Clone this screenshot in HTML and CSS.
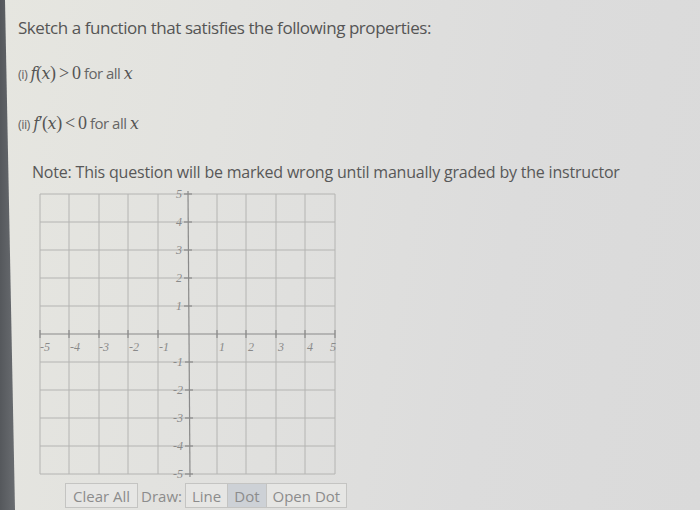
FILE: index.html
```html
<!DOCTYPE html>
<html>
<head>
<meta charset="utf-8">
<link rel="stylesheet" href="styles.css">
</head>
<body>
<div class="bezel"></div>
<main class="question">
  <p class="title">Sketch a function that satisfies the following properties:</p>
  <p class="prop"><span class="num">(i)</span> <span class="m">f</span><span class="r">(</span><span class="m">x</span><span class="r">)</span> <span class="r">&gt;</span> <span class="r">0</span> for all <span class="m">x</span></p>
  <p class="prop p2"><span class="num">(ii)</span> <span class="m">f</span><span class="r">&#8242;(</span><span class="m">x</span><span class="r">)</span> <span class="r">&lt;</span> <span class="r">0</span> for all <span class="m">x</span></p>
  <p class="note">Note: This question will be marked wrong until manually graded by the instructor</p>
  <svg class="graph" width="300" height="296" viewBox="0 0 300 296">
    <g transform="translate(0,6)">
    <g class="grid">
      <line x1="2" y1="4" x2="297" y2="4"/><line x1="2" y1="32" x2="297" y2="32"/><line x1="2" y1="60" x2="297" y2="60"/><line x1="2" y1="88" x2="297" y2="88"/><line x1="2" y1="116" x2="297" y2="116"/>
      <line x1="2" y1="172" x2="297" y2="172"/><line x1="2" y1="200" x2="297" y2="200"/><line x1="2" y1="228" x2="297" y2="228"/><line x1="2" y1="256" x2="297" y2="256"/><line x1="2" y1="284" x2="297" y2="284"/>
      <line x1="2" y1="4" x2="2" y2="284"/><line x1="31" y1="4" x2="31" y2="284"/><line x1="61" y1="4" x2="61" y2="284"/><line x1="90" y1="4" x2="90" y2="284"/><line x1="120" y1="4" x2="120" y2="284"/>
      <line x1="179" y1="4" x2="179" y2="284"/><line x1="208" y1="4" x2="208" y2="284"/><line x1="238" y1="4" x2="238" y2="284"/><line x1="267" y1="4" x2="267" y2="284"/><line x1="297" y1="4" x2="297" y2="284"/>
    </g>
    <g class="axis">
      <line x1="2" y1="144" x2="297" y2="144"/>
      <line x1="150" y1="1" x2="152" y2="287"/>
      <line x1="146" y1="4" x2="154" y2="4"/><line x1="146" y1="32" x2="154" y2="32"/><line x1="146" y1="60" x2="154" y2="60"/><line x1="146" y1="88" x2="154" y2="88"/><line x1="146" y1="116" x2="154" y2="116"/>
      <line x1="147" y1="172" x2="155" y2="172"/><line x1="147" y1="200" x2="155" y2="200"/><line x1="147" y1="228" x2="155" y2="228"/><line x1="147" y1="256" x2="155" y2="256"/><line x1="147" y1="284" x2="155" y2="284"/>
      <line x1="2" y1="140" x2="2" y2="148"/><line x1="31" y1="140" x2="31" y2="148"/><line x1="61" y1="140" x2="61" y2="148"/><line x1="90" y1="140" x2="90" y2="148"/><line x1="120" y1="140" x2="120" y2="148"/>
      <line x1="179" y1="140" x2="179" y2="148"/><line x1="208" y1="140" x2="208" y2="148"/><line x1="238" y1="140" x2="238" y2="148"/><line x1="267" y1="140" x2="267" y2="148"/><line x1="297" y1="140" x2="297" y2="148"/>
    </g>
    <g class="lbl ylbl">
      <text x="144" y="8">5</text><text x="144" y="36">4</text><text x="144" y="64">3</text><text x="144" y="92">2</text><text x="144" y="120">1</text>
      <text x="145" y="176">-1</text><text x="145" y="204">-2</text><text x="145" y="232">-3</text><text x="145" y="260">-4</text><text x="145" y="288">-5</text>
    </g>
    <g class="lbl xlbl">
      <text x="7" y="161">-5</text><text x="37" y="161">-4</text><text x="66" y="161">-3</text><text x="96" y="161">-2</text><text x="126" y="161">-1</text>
      <text x="184" y="161">1</text><text x="213" y="161">2</text><text x="243" y="161">3</text><text x="272" y="161">4</text><text x="295" y="161">5</text>
    </g>
    </g>
  </svg>
  <div class="tools">
    <button class="btn">Clear All</button>
    <span class="draw">Draw:</span>
    <div class="group">
      <button class="btn seg">Line</button><button class="btn seg active">Dot</button><button class="btn seg">Open Dot</button>
    </div>
  </div>
</main>
</body>
</html>
```
FILE: styles.css
```css
html, body {
  margin: 0;
  padding: 0;
  width: 700px;
  height: 510px;
  overflow: hidden;
}
body {
  background: linear-gradient(100deg, #e6e6e0 0%, #e2e2df 30%, #dcdcdc 70%, #dadada 100%);
  font-family: "Open Sans", "Liberation Sans", sans-serif;
  color: #5a5a5a;
  position: relative;
}
.bezel {
  position: absolute;
  left: 0;
  top: 0;
  width: 18px;
  height: 510px;
  background: linear-gradient(90deg, #55585c, #6e7175);
  clip-path: polygon(0 0, 5px 0, 15px 100%, 0 100%);
}
.question {
  padding: 16px 0 0 18px;
}
p { margin: 0; }
.title {
  font-size: 17px;
  line-height: 24px;
  letter-spacing: -0.45px;
  color: #555;
}
.prop {
  margin-top: 21px;
  font-size: 15px;
  line-height: 24px;
  height: 24px;
  margin-left: 0;
  color: #666;
  letter-spacing: -0.5px;
}
.prop.p2 { margin-top: 26px; }
.num { font-size: 13px; letter-spacing: -0.6px; }
.m {
  font-family: "DejaVu Serif", "Liberation Serif", serif;
  font-style: italic;
  font-size: 16px;
  color: #555;
}
.r {
  font-family: "Liberation Serif", serif;
  font-size: 18px;
  color: #555;
}
.note {
  margin-top: 26px;
  margin-left: 14px;
  font-size: 16px;
  line-height: 22px;
  letter-spacing: -0.2px;
  color: #585858;
}
.graph {
  display: block;
  margin: 1px 0 0 20px;
}
.grid line { stroke: #b4b4b2; stroke-width: 1; }
.axis line { stroke: #8a8a8a; stroke-width: 1.2; }
.lbl text {
  font-family: "Liberation Serif", serif;
  font-style: italic;
  font-size: 12px;
  fill: #8a8a8a;
}
.ylbl text { text-anchor: end; }
.xlbl text { text-anchor: middle; }
.tools {
  display: flex;
  align-items: center;
  margin: 3px 0 0 47px;
  gap: 3px;
}
.btn {
  font-family: "Open Sans", "Liberation Sans", sans-serif;
  font-size: 15px;
  color: #8c8c8c;
  background: #e6e6e4;
  border: 1px solid #c4c4c2;
  height: 25px;
  padding: 0 7px;
  margin: 0;
}
.draw {
  font-size: 15px;
  color: #8c8c8c;
}
.group { display: flex; }
.seg { margin-left: -1px; padding: 0 6px; }
.seg:first-child { margin-left: 0; }
.seg.active { background: #cdd1d6; }
```
